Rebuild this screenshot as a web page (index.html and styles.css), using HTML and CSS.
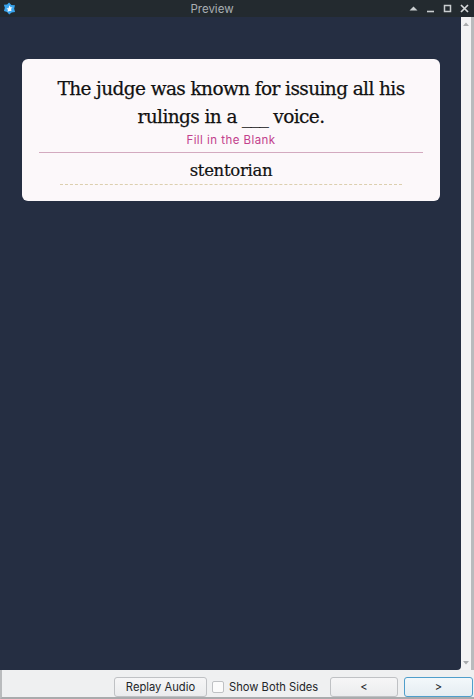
FILE: index.html
```html
<!DOCTYPE html>
<html lang="en">
<head>
    <meta charset="UTF-8">
    <meta name="viewport" content="width=device-width, initial-scale=1.0">
    <title>Preview</title>
    <link rel="stylesheet" href="styles.css">
</head>
<body>
    <div class="window">
        <div class="titlebar">
            <svg class="app-icon" viewBox="0 0 14 14">
                <path d="M6.500.5l2.500 2.700 3.900.4-.9 3.700 1 3.400-3.700.6-2.600 2.200-2.300-2.800L1 9.600l1-3.300L.9 3l3.500-.4z" fill="#3aa5ee"/>
                <path d="M7 3.600l1.100 2 2.200.2-1.600 1.600.4 2.200L7 9.600l-2.100 1 .4-2.200-1.600-1.600 2.200-.2z" fill="#f2f9fd"/>
            </svg>
            <span class="titlebar__text">Preview</span>
            <div class="titlebar__buttons">
                <svg viewBox="0 0 11 11"><path d="M1.500 7.500L5.500 3.500 9.500 7.500z" fill="#c9cdcf"/></svg>
                <svg viewBox="0 0 11 11"><path d="M2 8.500h7" stroke="#c9cdcf" stroke-width="1.600"/></svg>
                <svg viewBox="0 0 11 11"><path d="M2.500 2.500h6v6h-6z" fill="none" stroke="#c9cdcf" stroke-width="1.500"/></svg>
                <svg viewBox="0 0 11 11"><path d="M2 2l7 7M9 2l-7 7" stroke="#d5d8da" stroke-width="1.700"/></svg>
            </div>
        </div>
        <div class="content">
            <div class="viewer">
                <div class="card">
                    <div class="question">The judge was known for issuing all his rulings in a ___ voice.</div>
                    <div class="type">Fill in the Blank</div>
                    <div class="answer">stentorian</div>
                </div>
            </div>
            <div class="scrollbar">
                <svg viewBox="0 0 10 8"><path d="M2 6l3-3.500L8 6z" fill="#a9abad"/></svg>
                <svg viewBox="0 0 10 8"><path d="M2 2l3 3.500L8 2z" fill="#a9abad"/></svg>
            </div>
        </div>
        <div class="toolbar">
            <button class="button button--replay">Replay Audio</button>
            <label class="check"><span class="check__box"></span>Show Both Sides</label>
            <button class="button button--nav">&lt;</button>
            <button class="button button--nav button--focus">&gt;</button>
        </div>
    </div>
</body>
</html>
```

FILE: styles.css
```css
html, body {
    margin: 0;
    height: 100%;
}
body {
    font-family: Inter, sans-serif;
    background-color: #eff0f1;
}
.window {
    display: flex;
    flex-direction: column;
    height: 699px;
    overflow: hidden;
}
.titlebar {
    position: relative;
    flex: none;
    height: 17px;
    background-color: #232a2f;
    display: flex;
    align-items: center;
    justify-content: center;
    padding-right: 50px;
}
.app-icon {
    position: absolute;
    left: 3px;
    top: 2px;
    width: 13px;
    height: 13px;
}
.titlebar__text {
    font-size: 11.5px;
    color: #a9afb3;
}
.titlebar__buttons {
    position: absolute;
    right: 4px;
    top: 3px;
    display: flex;
    gap: 6px;
}
.titlebar__buttons svg {
    width: 11px;
    height: 11px;
}
.content {
    flex: none;
    height: 653px;
    display: flex;
    background-color: #f3f3f4;
}
.viewer {
    flex: 1;
    background-color: #252e42;
    padding: 42px 21px 0 22px;
    border-bottom-right-radius: 4px;
}
.card {
    background-color: #fcf8fa;
    border-radius: 6px;
    height: 142px;
    padding: 16px 17px 0 17px;
    box-sizing: border-box;
    text-align: center;
}
.question {
    font-family: "DejaVu Serif", serif;
    font-size: 18.5px;
    line-height: 28px;
    letter-spacing: -0.6px;
    -webkit-text-stroke: 0.25px #111;
    color: #111;
    padding: 0 10px;
}
.type {
    font-size: 11.5px;
    line-height: 16px;
    letter-spacing: 0.45px;
    color: #c2408c;
    margin-top: 1px;
    padding-bottom: 4px;
    border-bottom: 1px solid #d3aabf;
}
.answer {
    font-family: "DejaVu Serif", serif;
    font-size: 16.5px;
    line-height: 24px;
    letter-spacing: -0.3px;
    -webkit-text-stroke: 0.2px #111;
    color: #111;
    margin: 6px 21px 0 21px;
    border-bottom: 1px dashed #dccfae;
    height: 25px;
}
.scrollbar {
    flex: none;
    width: 13px;
    background-color: #f3f3f4;
    border-right: 3px solid #b9bbbd;
    box-sizing: border-box;
    display: flex;
    flex-direction: column;
    justify-content: space-between;
    padding: 3px 0;
}
.scrollbar svg {
    width: 10px;
    height: 8px;
}
.toolbar {
    flex: 1;
    display: flex;
    align-items: flex-start;
    padding: 7px 0 0 112px;
    font-size: 11.2px;
    color: #232629;
    background-color: #eff0f1;
    border-left: 2px solid #b9bbbd;
    border-bottom: 2px solid #a9abad;
}
.button {
    height: 20px;
    background: linear-gradient(#f6f6f7, #ebecee);
    border: 1px solid #bfc1c4;
    border-radius: 3px;
    font-family: Inter, sans-serif;
    font-size: 11.2px;
    color: #232629;
    padding: 0;
}
.button--replay {
    width: 93px;
}
.button--nav {
    width: 68px;
    margin-right: 6px;
}
.button--focus {
    width: 69px;
    margin-right: 0;
    border-color: #4f9ecb;
    background: linear-gradient(#f3f8fb, #e5edf2);
}
.check {
    display: flex;
    align-items: center;
    gap: 5px;
    height: 20px;
    margin-left: 5px;
    width: 118px;
}
.check__box {
    flex: none;
    width: 10px;
    height: 10px;
    background-color: #fbfbfb;
    border: 1px solid #bfc1c4;
    border-radius: 2px;
}
```
